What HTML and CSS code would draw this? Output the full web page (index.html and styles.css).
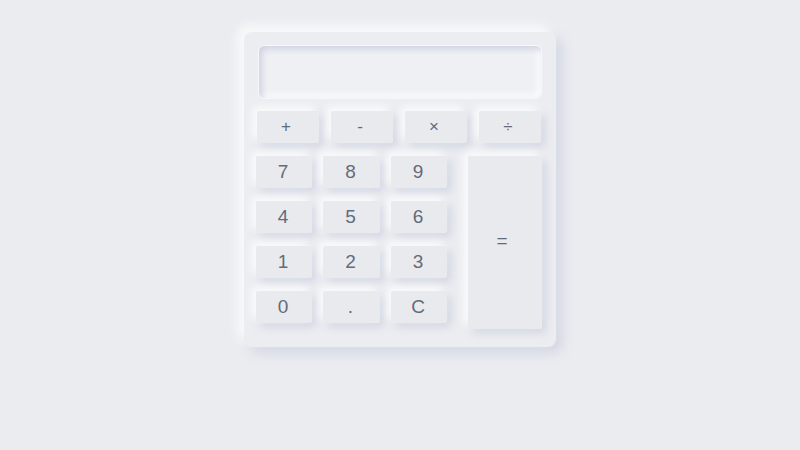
FILE: index.html
```html
<!DOCTYPE html>
<html>
<head>
<meta charset="utf-8">
<link rel="stylesheet" href="styles.css">
</head>
<body>
<div class="calc">
  <div class="display"></div>
  <div class="ops">
    <div class="key op">+</div>
    <div class="key op">-</div>
    <div class="key op">×</div>
    <div class="key op">÷</div>
  </div>
  <div class="body">
    <div class="nums">
      <div class="key">7</div>
      <div class="key">8</div>
      <div class="key">9</div>
      <div class="key">4</div>
      <div class="key">5</div>
      <div class="key">6</div>
      <div class="key">1</div>
      <div class="key">2</div>
      <div class="key">3</div>
      <div class="key">0</div>
      <div class="key">.</div>
      <div class="key">C</div>
    </div>
    <div class="key equals">=</div>
  </div>
</div>
</body>
</html>
```
FILE: styles.css
```css
html, body {
  margin: 0;
  background: #ebecf0;
  font-family: "Liberation Sans", Arial, sans-serif;
}
body {
  height: 450px;
  display: flex;
  justify-content: center;
  align-items: flex-start;
  padding-top: 32px;
  box-sizing: border-box;
}
.calc {
  width: 312px;
  box-sizing: border-box;
  padding: 13px 14px 18px 13px;
  background: #ecedf1;
  border-radius: 8px;
  box-shadow: -6px -6px 12px rgba(255,255,255,0.8), 6px 6px 12px rgba(200,205,222,0.7);
}
.display {
  height: 54px;
  margin-left: 1px;
  border-radius: 6px;
  background: #eff0f4;
  box-shadow: inset 3px 3px 6px rgba(196,202,220,0.8), inset -3px -3px 6px rgba(255,255,255,0.9);
  border: 1px solid #f6f7fa;
  box-sizing: border-box;
}
.ops {
  display: flex;
  gap: 12px;
  margin-top: 12px;
}
.key {
  height: 32px;
  box-sizing: border-box;
  padding-right: 2px;
  display: flex;
  align-items: center;
  justify-content: center;
  background: #e9eaee;
  color: #646b7a;
  font-size: 19px;
  border-radius: 2px;
  box-shadow: -4px -4px 8px rgba(255,255,255,0.85), 4px 4px 8px rgba(200,205,222,0.75);
}
.op {
  width: 62px;
  font-size: 17px;
  padding-right: 4px;
}
.body {
  display: flex;
  margin-top: 13px;
  margin-left: -1px;
}
.nums {
  display: grid;
  grid-template-columns: 56px 57px 56px;
  grid-auto-rows: 32px;
  column-gap: 11px;
  row-gap: 13px;
}
.equals {
  width: 74px;
  height: 173px;
  margin-left: 21px;
  padding-right: 6px;
  padding-bottom: 4px;
}
```
